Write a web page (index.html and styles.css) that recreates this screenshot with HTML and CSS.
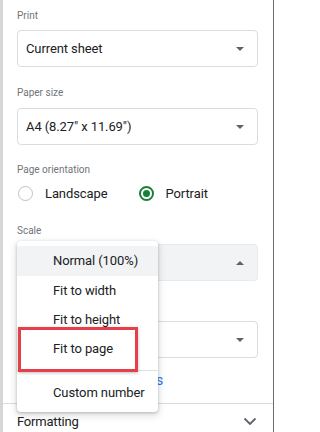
FILE: index.html
```html
<!DOCTYPE html>
<html>
<head>
<meta charset="utf-8">
<link rel="stylesheet" href="styles.css">
</head>
<body>
<div class="frame">
  <div class="panel">
    <div class="label l-print">Print</div>
    <div class="select">
      <span>Current sheet</span>
      <span class="caret down"></span>
    </div>
    <div class="label l-paper">Paper size</div>
    <div class="select s-paper">
      <span>A4 (8.27" x 11.69")</span>
      <span class="caret down"></span>
    </div>
    <div class="label l-orient">Page orientation</div>
    <div class="radios">
      <div class="radio-opt">
        <span class="radio"></span>
        <span>Landscape</span>
      </div>
      <div class="radio-opt">
        <span class="radio checked"></span>
        <span>Portrait</span>
      </div>
    </div>
    <div class="label l-scale">Scale</div>
    <div class="select active">
      <span></span>
      <span class="caret up"></span>
    </div>
    <div class="spacer"></div>
    <div class="select s-margins">
      <span></span>
      <span class="caret down"></span>
    </div>
    <div class="link"><span class="link-hidden">Set custom page break</span>s</div>
    <div class="divider"></div>
    <div class="section">
      <span>Formatting</span>
      <svg class="chev" width="14" height="9" viewBox="0 0 14 9"><path d="M1.5 1.5 L7 7 L12.5 1.5" fill="none" stroke="#5f6368" stroke-width="1.8"/></svg>
    </div>

    <div class="menu">
      <div class="item hl">Normal (100%)</div>
      <div class="item">Fit to width</div>
      <div class="item">Fit to height</div>
      <div class="item">Fit to page</div>
      <div class="sep"></div>
      <div class="item">Custom number</div>
    </div>
    <div class="highlight-box"></div>
  </div>
</div>
</body>
</html>
```
FILE: styles.css
```css
html, body {
  margin: 0;
  padding: 0;
  background: #ffffff;
}
body {
  width: 277px;
  height: 432px;
  overflow: hidden;
  font-family: Roboto, "Liberation Sans", Arial, sans-serif;
  color: #202124;
}
.frame {
  width: 274px;
  height: 432px;
  border-right: 1px solid #6b6b6b;
  box-sizing: border-box;
}
.panel {
  position: relative;
  height: 432px;
  border-left: 3px solid #d6d6d6;
  box-sizing: border-box;
  padding: 0 14px 0 14px;
  display: flex;
  flex-direction: column;
}
.panel > * {
  flex-shrink: 0;
}
.label {
  font-size: 10px;
  line-height: 14px;
  height: 14px;
  color: #70757a;
}
.l-print { margin-top: 9px; margin-bottom: 7px; }
.l-paper { margin-top: 19px; margin-bottom: 8px; }
.l-orient { margin-top: 18px; margin-bottom: 6px; }
.l-scale { margin-top: 21px; margin-bottom: 6px; }
.spacer { height: 40px; }
.select {
  height: 37px;
  box-sizing: border-box;
  width: 241px;
  border: 1px solid #dadce0;
  border-radius: 4px;
  display: flex;
  align-items: center;
  justify-content: space-between;
  padding: 0 13px 0 8px;
  font-size: 13px;
  color: #202124;
  letter-spacing: -0.1px;
}
.select.active {
  background: #f1f3f4;
  border-color: #e8eaed;
}
.caret {
  width: 0;
  height: 0;
  border-left: 4px solid transparent;
  border-right: 4px solid transparent;
}
.caret.down { border-top: 4px solid #5f6368; }
.caret.up { border-bottom: 4px solid #5f6368; }
.radios {
  display: flex;
  height: 20px;
  align-items: center;
  font-size: 13px;
  letter-spacing: -0.1px;
  padding-left: 1px;
}
.radio-opt {
  display: flex;
  align-items: center;
  gap: 12px;
  width: 122px;
}
.radio {
  width: 15px;
  height: 15px;
  box-sizing: border-box;
  border: 1.5px solid #bdc1c6;
  border-radius: 50%;
  position: relative;
}
.radio.checked {
  border: 2px solid #188038;
}
.radio.checked::after {
  content: "";
  position: absolute;
  left: 2px;
  top: 2px;
  width: 7px;
  height: 7px;
  border-radius: 50%;
  background: #188038;
}
.link {
  margin-top: 15px;
  height: 14px;
  line-height: 14px;
  font-size: 14px;
  color: #1a73e8;
  letter-spacing: -0.2px;
}
.link-hidden {
  visibility: hidden;
}
.divider {
  margin-top: 16px;
  height: 1px;
  background: #dadce0;
  margin-left: -14px;
  margin-right: -14px;
}
.section {
  display: flex;
  align-items: center;
  justify-content: space-between;
  height: 34px;
  font-size: 13px;
  letter-spacing: -0.2px;
  padding-right: 2px;
}
.menu {
  position: absolute;
  left: 14px;
  top: 241px;
  width: 141px;
  height: 171px;
  box-sizing: border-box;
  background: #ffffff;
  border-radius: 4px;
  box-shadow: 0 1px 3px rgba(60,64,67,0.3), 0 3px 6px 2px rgba(60,64,67,0.12);
  padding: 5px 0 6px 0;
}
.item {
  height: 29px;
  line-height: 29px;
  padding-left: 36px;
  font-size: 13px;
  color: #202124;
  letter-spacing: -0.1px;
}
.item.hl {
  background: #f1f3f4;
  height: 30px;
  line-height: 30px;
}
.sep {
  height: 1px;
  background: #e0e0e0;
  margin: 7px 0 7px 0;
}
.highlight-box {
  position: absolute;
  left: 15px;
  top: 327px;
  width: 120px;
  height: 45px;
  box-sizing: border-box;
  border: 3px solid #e5404a;
  box-shadow: 0 1px 3px rgba(0,0,0,0.25);
}
```
